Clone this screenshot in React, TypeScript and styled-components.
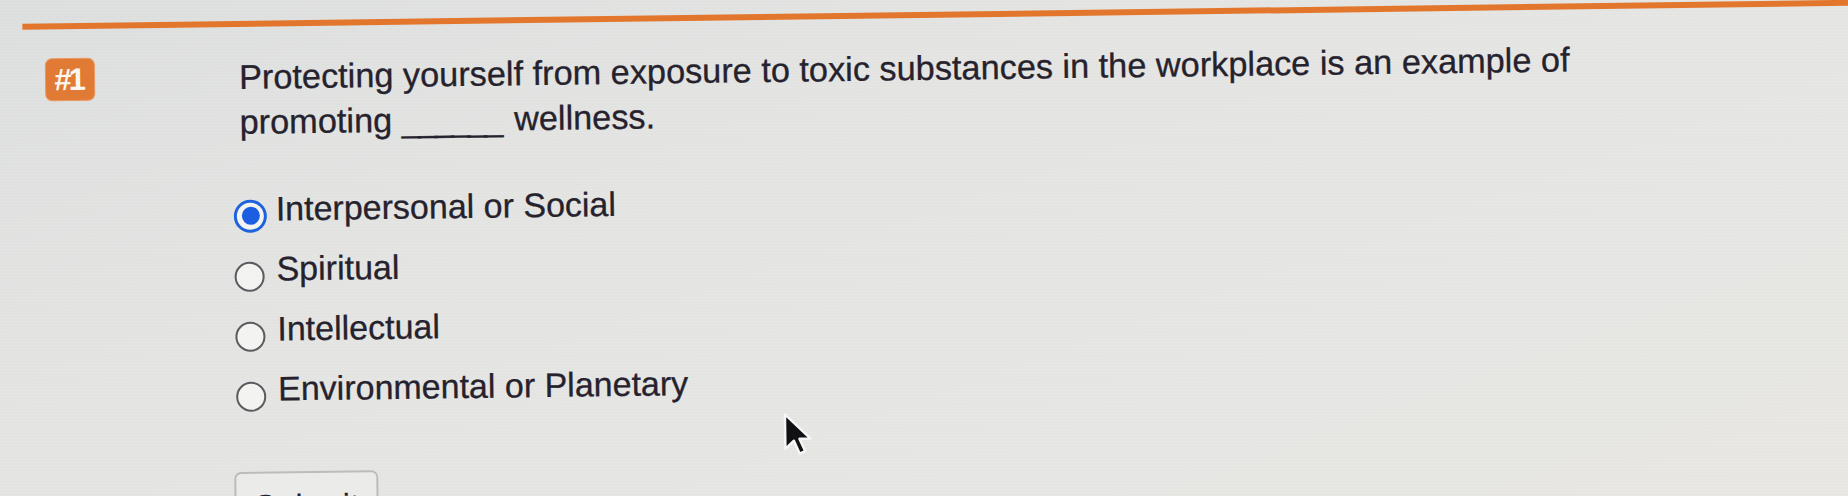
import styled, { createGlobalStyle } from 'styled-components';

const GlobalStyle = createGlobalStyle`
    html, body {
        margin: 0;
        padding: 0;
        background: #e2e3e1;
        overflow: hidden;
    }
    * {
        box-sizing: border-box;
    }
`;

const Screen = styled.div`
    position: relative;
    width: 1848px;
    height: 496px;
    overflow: hidden;
    background:
        repeating-linear-gradient(0deg, rgba(255, 255, 255, 0.08) 0px, rgba(255, 255, 255, 0.08) 1px, transparent 1px, transparent 3px),
        linear-gradient(160deg, #dcdedd 0%, #e3e4e2 35%, #e7e6e3 100%);
    font-family: 'Liberation Sans', Arial, Helvetica, sans-serif;
`;

const Page = styled.div`
    position: relative;
    width: 1900px;
    padding-top: 24px;
    transform: rotate(-0.75deg);
    transform-origin: 0 0;
`;

const Card = styled.section`
    margin-left: 22px;
    border-top: 6px solid #e3762d;
    padding: 29px 0 0 22px;
    display: grid;
    grid-template-columns: 50px 1fr;
    column-gap: 144px;
`;

const Badge = styled.div`
    width: 50px;
    height: 43px;
    border-radius: 7px;
    background: #e07a34;
    border: 1px solid #ea9862;
    color: #fdf6ef;
    font-weight: 700;
    font-size: 31px;
    display: flex;
    align-items: center;
    justify-content: center;
    letter-spacing: -3px;
    padding-right: 3px;
`;

const Body = styled.div`
    display: flex;
    flex-direction: column;
`;

const Question = styled.p`
    margin: -1px 0 0;
    width: 1400px;
    font-size: 34.3px;
    line-height: 45px;
    color: #26222d;
    -webkit-text-stroke: 0.3px #26222d;
`;

const Blank = styled.span`
    letter-spacing: -2.6px;
    margin-right: 4px;
`;

const OptionList = styled.div`
    display: flex;
    flex-direction: column;
    margin-top: 34px;
    margin-left: -7px;
`;

const Option = styled.label`
    display: flex;
    align-items: center;
    gap: 12px;
    height: 60px;
    font-size: 34px;
    color: #26222d;
    -webkit-text-stroke: 0.3px #26222d;
`;

const Radio = styled.span<{ checked?: boolean }>`
    flex: none;
    width: ${(p) => (p.checked ? 33 : 30)}px;
    height: ${(p) => (p.checked ? 33 : 30)}px;
    margin: ${(p) => (p.checked ? '14px -3px 0 0' : '16px 0 0 0')};
    border-radius: 50%;
    border: ${(p) => (p.checked ? '3px solid #1f63dc' : '2px solid #5b5a5e')};
    background: #f3f3f2;
    display: flex;
    align-items: center;
    justify-content: center;

    &::after {
        content: '';
        display: ${(p) => (p.checked ? 'block' : 'none')};
        width: 18px;
        height: 18px;
        border-radius: 50%;
        background: #1b5fe0;
    }
`;

const SubmitButton = styled.button`
    align-self: flex-start;
    margin: 53px 0 0 -10px;
    width: 144px;
    height: 56px;
    padding: 14px 0 0;
    border: 2px solid #bcbcbb;
    border-radius: 7px;
    background: #ebebea;
    font-family: 'Liberation Sans', Arial, Helvetica, sans-serif;
    font-size: 34px;
    line-height: 38px;
    color: #26222d;
    text-align: center;
`;

const Cursor = styled.svg`
    position: absolute;
    left: 777px;
    top: 422px;
    width: 32px;
    height: 47px;
`;

const options = [
    { label: 'Interpersonal or Social', checked: true },
    { label: 'Spiritual', checked: false },
    { label: 'Intellectual', checked: false },
    { label: 'Environmental or Planetary', checked: false },
];

const App = () => (
    <Screen>
        <GlobalStyle />
        <Page>
            <Card>
                <Badge>#1</Badge>
                <Body>
                    <Question>
                        Protecting yourself from exposure to toxic substances in the workplace is an example of promoting{' '}
                        <Blank>______</Blank> wellness.
                    </Question>
                    <OptionList>
                        {options.map((o) => (
                            <Option key={o.label}>
                                <Radio checked={o.checked} />
                                {o.label}
                            </Option>
                        ))}
                    </OptionList>
                    <SubmitButton>Submit</SubmitButton>
                </Body>
            </Card>
            <Cursor viewBox="0 0 26 38">
                <path
                    d="M2 2 L2 30 L9 23.5 L13.5 34 L18 32 L13.5 22 L22.5 22 Z"
                    fill="#111014"
                    stroke="#f6f6f6"
                    strokeWidth="2"
                    strokeLinejoin="round"
                />
            </Cursor>
        </Page>
    </Screen>
);

export default App;
